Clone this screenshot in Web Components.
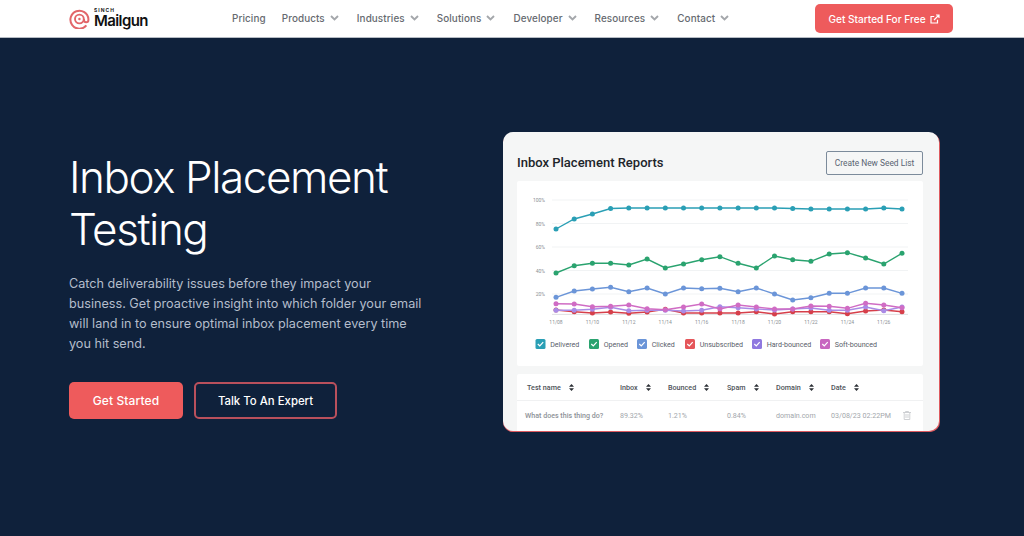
<!DOCTYPE html>
<html lang="en">
<head>
<meta charset="utf-8">
<title>Inbox Placement Testing</title>
<style>
  html, body { margin: 0; padding: 0; background: #0f213b; }
  body { width: 1024px; height: 536px; overflow: hidden; font-family: Inter, "Liberation Sans", sans-serif; }
</style>
</head>
<body>
<mg-header></mg-header>
<mg-hero></mg-hero>

<script>
const CHEVRON = `<svg width="9" height="6" viewBox="0 0 9 6"><path d="M1 1l3.5 3.5L8 1" fill="none" stroke="currentColor" stroke-width="1.9"/></svg>`;

class MgLogo extends HTMLElement {
    constructor() {
        super();
        this.attachShadow({ mode: 'open' }).innerHTML = `
            <style>
                :host { display: flex; align-items: center; gap: 4px; width: 163px; flex: none; }
                svg { display: block; flex: none; }
                .words { display: flex; flex-direction: column; }
                .sinch { font-size: 5px; font-weight: 700; letter-spacing: 1px; line-height: 6px; color: #222; margin-top: -1px; }
                .name { font-size: 15px; font-weight: 600; letter-spacing: -.6px; line-height: 16px; color: #111; }
            </style>
            <svg width="21" height="20" viewBox="0 0 21 20" fill="none" stroke="#e2666a">
                <path d="M17.4 16.4A9 9 0 1 1 19.4 10v1a2.2 2.2 0 0 1-4.4 0V10" stroke-width="2"/>
                <circle cx="10.4" cy="10" r="4.4" stroke-width="1.9"/>
                <circle cx="10.4" cy="10" r="1.2" fill="#e2666a" stroke="none"/>
            </svg>
            <div class="words"><span class="sinch">SINCH</span><span class="name">Mailgun</span></div>
        `;
    }
}

class MgNavItem extends HTMLElement {
    constructor() {
        super();
        const menu = this.hasAttribute('menu');
        this.attachShadow({ mode: 'open' }).innerHTML = `
            <style>
                :host { display: inline-flex; align-items: center; gap: 5px; font-size: 9.9px; font-weight: 500; color: #666a70; letter-spacing: .1px; white-space: nowrap; }
                svg { color: #a4a7ab; display: block; }
            </style>
            <slot></slot>${menu ? CHEVRON : ''}
        `;
    }
}

class MgButton extends HTMLElement {
    constructor() {
        super();
        this.attachShadow({ mode: 'open' }).innerHTML = `
            <style>
                :host { display: inline-flex; align-items: center; justify-content: center; gap: 4px; box-sizing: border-box; background: #ee5b5c; color: #fff; border-radius: 5px; font-size: 12px; font-weight: 500; white-space: nowrap; }
                :host([outline]) { background: transparent; border: 2px solid #b9505c; color: #f2f4f7; }
            </style>
            <slot></slot>
        `;
    }
}

class MgHeader extends HTMLElement {
    constructor() {
        super();
        this.attachShadow({ mode: 'open' }).innerHTML = `
            <style>
                :host { display: flex; align-items: center; box-sizing: border-box; height: 38px; background: #fff; padding: 0 71px 0 69px; border-bottom: 1px solid #b6bcc4; }
                nav { display: flex; align-items: center; gap: 18px; flex: 1; padding-bottom: 2px; }
                nav mg-nav-item:first-child { margin-right: -2px; }
                mg-button { width: 138px; height: 29px; font-size: 10.1px; }
                svg { display: block; }
            </style>
            <mg-logo></mg-logo>
            <nav>
                <mg-nav-item>Pricing</mg-nav-item>
                <mg-nav-item menu>Products</mg-nav-item>
                <mg-nav-item menu>Industries</mg-nav-item>
                <mg-nav-item menu>Solutions</mg-nav-item>
                <mg-nav-item menu>Developer</mg-nav-item>
                <mg-nav-item menu>Resources</mg-nav-item>
                <mg-nav-item menu>Contact</mg-nav-item>
            </nav>
            <mg-button>Get Started For Free
                <svg width="10" height="10" viewBox="0 0 10 10" fill="none" stroke="#fff" stroke-width="1.2">
                    <path d="M7.5 5.8V9H1V2.5h3.2M4 6l5-5M6 1h3v3"/>
                </svg>
            </mg-button>
        `;
    }
}

class MgHero extends HTMLElement {
    constructor() {
        super();
        this.attachShadow({ mode: 'open' }).innerHTML = `
            <style>
                :host { display: flex; box-sizing: border-box; height: 498px; background: #0f213b; padding: 94px 0 0 69px; }
                .copy { width: 434px; flex: none; padding-top: 19px; }
                h1 { margin: 0; font-size: 44px; font-weight: 300; line-height: 52px; letter-spacing: -1.45px; color: #fff; }
                p { margin: 19px 0 0; width: 356px; font-size: 12.65px; line-height: 20px; color: #b4bdcb; }
                .actions { display: flex; gap: 11px; margin-top: 28px; }
                mg-button { width: 114px; height: 37px; letter-spacing: .1px; }
                mg-button[outline] { width: 143px; color: #fff; font-size: 11.4px; letter-spacing: 0; }
            </style>
            <div class="copy">
                <h1>Inbox Placement<br>Testing</h1>
                <p>Catch deliverability issues before they impact your business. Get proactive insight into which folder your email will land in to ensure optimal inbox placement every time you hit send.</p>
                <div class="actions">
                    <mg-button>Get Started</mg-button>
                    <mg-button outline>Talk To An Expert</mg-button>
                </div>
            </div>
            <mg-report-card></mg-report-card>
        `;
    }
}

class MgReportCard extends HTMLElement {
    constructor() {
        super();
        this.attachShadow({ mode: 'open' }).innerHTML = `
            <style>
                :host { display: block; box-sizing: border-box; width: 436px; height: 299px; background: #f5f6f6; border-radius: 10px; padding: 0 16px 0 14px; box-shadow: 1px 1px 0 #dd5a5f, 0 1px 0 #dd5a5f; overflow: hidden; font-family: Roboto, "Liberation Sans", sans-serif; }
                .top { display: flex; align-items: center; justify-content: space-between; height: 49px; padding-top: 12px; box-sizing: border-box; }
                h2 { margin: 0; font-size: 13px; font-weight: 500; color: #20242a; }
                button { all: unset; box-sizing: border-box; display: flex; align-items: center; justify-content: center; width: 97px; height: 24px; border: 1px solid #7c8b9b; border-radius: 2px; font-size: 8.4px; color: #5a6472; }
                .panel { background: #fff; border-radius: 2px; }
                .chart { height: 185px; }
                mg-table { margin-top: 8px; }
            </style>
            <div class="top">
                <h2>Inbox Placement Reports</h2>
                <button>Create New Seed List</button>
            </div>
            <div class="panel chart"><mg-chart></mg-chart></div>
            <mg-table></mg-table>
        `;
    }
}

// y values are read off the picture, in page pixels minus the panel's top (181)
const SERIES = [
    { color: '#2a9fb5', ys: [229,219,214,208.5,208,208,208,208,208,208,208,208,208,208.5,209,209,209,209,208,209] },
    { color: '#2aa36f', ys: [273,265.7,263.3,263.3,265,259,268,264,259.7,256.7,263.3,268,256,259.7,261.3,254,252.7,258,264,253.3] },
    { color: '#6b95d8', ys: [297.3,291,289,287.3,291.7,288,294,288,288.7,288.3,291.7,288,294,300,297.7,293.3,293.3,288,288,293.3] },
    { color: '#d63f4a', ys: [310,311.7,313,312,313.3,312,309.3,313,313,313,313,311.7,314,311.7,311.7,311.7,313.7,311,310,311.7] },
    { color: '#a98be6', ys: [310.3,310.3,309.3,307.3,310.7,310.3,310.3,311,310.3,306.7,307.7,309,310,309,308,310.3,310.3,307,310.7,307] },
    { color: '#d06cc4', ys: [303.7,304,306.7,306.3,305,308.7,309.7,307,304,309,305,307,309,309,306,306.3,308.3,303.3,305,307.7] },
];
const LEGEND = [
    ['Delivered', 18.5, '#2a9fb5'], ['Opened', 72, '#2aa36f'], ['Clicked', 120, '#6b95d8'],
    ['Unsubscribed', 168, '#e5565a'], ['Hard-bounced', 235, '#8f78e0'], ['Soft-bounced', 303, '#c866c0'],
];

class MgChart extends HTMLElement {
    constructor() {
        super();
        const X0 = 39, STEP = 18.21, TOP = 181;
        let s = '';
        [[100, 200], [80, 223.5], [60, 247], [40, 270.5], [20, 294]].forEach(([v, y]) => {
            s += `<line x1="35" x2="391" y1="${y - TOP}" y2="${y - TOP}" stroke="#eef0f1" stroke-width=".8"/>`;
            s += `<text x="28" y="${y - TOP + 2}" text-anchor="end" class="tick">${v}%</text>`;
        });
        s += `<line x1="35" x2="391" y1="133.4" y2="133.4" stroke="#d5d8da" stroke-width=".8"/>`;
        for (let i = 0; i < 10; i++) {
            const day = String(8 + i * 2).padStart(2, '0');
            s += `<text x="${X0 + i * 2 * STEP}" y="143" text-anchor="middle" class="tick">11/${day}</text>`;
        }
        SERIES.forEach(({ color, ys }) => {
            const pts = ys.map((y, i) => [(X0 + i * STEP).toFixed(1), (y - TOP).toFixed(1)]);
            s += `<polyline points="${pts.map(p => p.join(',')).join(' ')}" fill="none" stroke="${color}" stroke-width="1.4"/>`;
            pts.forEach(p => { s += `<circle cx="${p[0]}" cy="${p[1]}" r="2.5" fill="${color}"/>`; });
        });
        LEGEND.forEach(([label, x, color]) => {
            s += `<rect x="${x}" y="158" width="10" height="10" rx="1.5" fill="${color}"/>`;
            s += `<path d="M${x + 2.3} 163l2 2 3.4-3.8" fill="none" stroke="#fff" stroke-width="1.2"/>`;
            s += `<text x="${x + 14.7}" y="165.7" class="legend">${label}</text>`;
        });
        this.attachShadow({ mode: 'open' }).innerHTML = `
            <style>
                :host { display: block; height: 185px; }
                svg { display: block; }
                .tick { font-size: 5px; fill: #8b9095; }
                .legend { font-size: 7.1px; fill: #59606a; }
            </style>
            <svg width="406" height="185" viewBox="0 0 406 185">${s}</svg>
        `;
    }
}

class MgTable extends HTMLElement {
    constructor() {
        super();
        const sort = `<svg width="5" height="7" viewBox="0 0 5 7"><path d="M2.5 0L5 2.8H0zM2.5 7L0 4.2h5z" fill="#2b2f35"/></svg>`;
        const heads = ['Test name', 'Inbox', 'Bounced', 'Spam', 'Domain', 'Date'];
        const widths = [95, 48, 59, 49, 55, 72];
        const cells = ['What does this thing do?', '89.32%', '1.21%', '0.84%', 'domain.com', '03/08/23 02:22PM'];
        this.attachShadow({ mode: 'open' }).innerHTML = `
            <style>
                :host { display: block; height: 70px; background: #fff; border-radius: 2px; }
                .row { display: grid; grid-template-columns: ${widths.map(w => w + 'px').join(' ')} 1fr; align-items: center; padding-left: 8px; }
                .head { height: 26px; border-bottom: 1px solid #f0f1f2; font-size: 7.2px; font-weight: 500; color: #4e5359; }
                .head span { display: flex; align-items: center; gap: 8px; }
                .head span:first-child { padding-left: 2px; }
                .body { height: 29px; font-size: 7.1px; color: #a2a6ab; }
                .first { font-weight: 500; color: #8e9297; }
                svg { display: block; }
            </style>
            <div class="row head">
                ${heads.map(h => `<span>${h} ${sort}</span>`).join('')}
            </div>
            <div class="row body">
                ${cells.map((c, i) => `<span class="${i ? '' : 'first'}">${c}</span>`).join('')}
                <svg width="8" height="9" viewBox="0 0 8 9" fill="none" stroke="#c9cccf" stroke-width=".9"><path d="M0 1.5h8M2.5 1.5V.5h3v1M1.2 1.5V8.5h5.6V1.5M3 3v4M5 3v4"/></svg>
            </div>
        `;
    }
}

customElements.define('mg-logo', MgLogo);
customElements.define('mg-nav-item', MgNavItem);
customElements.define('mg-button', MgButton);
customElements.define('mg-header', MgHeader);
customElements.define('mg-chart', MgChart);
customElements.define('mg-table', MgTable);
customElements.define('mg-report-card', MgReportCard);
customElements.define('mg-hero', MgHero);
</script>
</body>
</html>
